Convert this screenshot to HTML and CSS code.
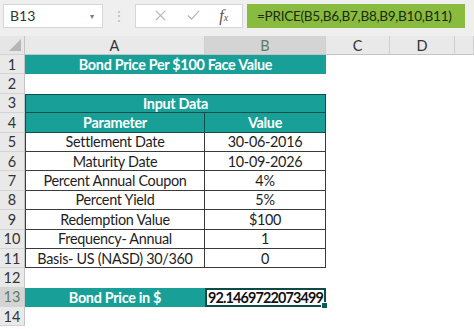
FILE: index.html
```html
<!DOCTYPE html>
<html lang="en">
<head>
  <meta charset="UTF-8" />
  <title>PRICE Function</title>
  <link rel="stylesheet" href="styles.css">
</head>
<body>
  <div class="toolbar">
    <div class="namebox">
      <span>B13</span>
      <span class="caret">&#9662;</span>
    </div>
    <div class="dots">&#8942;</div>
    <div class="fxbox">
      <svg class="ico" viewBox="0 0 14 14"><path d="M2 2 L12 12 M12 2 L2 12" /></svg>
      <svg class="ico" viewBox="0 0 14 14"><path d="M1 7 L5 11 L13 2" /></svg>
      <span class="fx">f<sub>x</sub></span>
    </div>
    <div class="formula">=PRICE(B5,B6,B7,B8,B9,B10,B11)</div>
  </div>

  <div class="sheet">
    <div class="row head">
      <div class="rh corner"></div>
      <div class="ch ca">A</div>
      <div class="ch cb sel">B</div>
      <div class="ch cc">C</div>
      <div class="ch cd">D</div>
      <div class="ch ce"></div>
    </div>

    <div class="row">
      <div class="rh">1</div>
      <div class="c ab teal">Bond Price Per $100 Face Value</div>
    </div>
    <div class="row">
      <div class="rh">2</div>
    </div>
    <div class="row">
      <div class="rh">3</div>
      <div class="c ab teal bd top">Input Data</div>
    </div>
    <div class="row">
      <div class="rh">4</div>
      <div class="c ca teal bd">Parameter</div>
      <div class="c cb teal bd">Value</div>
    </div>
    <div class="row">
      <div class="rh">5</div>
      <div class="c ca bd">Settlement Date</div>
      <div class="c cb bd">30-06-2016</div>
    </div>
    <div class="row">
      <div class="rh">6</div>
      <div class="c ca bd">Maturity Date</div>
      <div class="c cb bd">10-09-2026</div>
    </div>
    <div class="row">
      <div class="rh">7</div>
      <div class="c ca bd">Percent Annual Coupon</div>
      <div class="c cb bd">4%</div>
    </div>
    <div class="row">
      <div class="rh">8</div>
      <div class="c ca bd">Percent Yield</div>
      <div class="c cb bd">5%</div>
    </div>
    <div class="row">
      <div class="rh">9</div>
      <div class="c ca bd">Redemption Value</div>
      <div class="c cb bd">$100</div>
    </div>
    <div class="row">
      <div class="rh">10</div>
      <div class="c ca bd">Frequency- Annual</div>
      <div class="c cb bd">1</div>
    </div>
    <div class="row">
      <div class="rh">11</div>
      <div class="c ca bd">Basis- US (NASD) 30/360</div>
      <div class="c cb bd">0</div>
    </div>
    <div class="row">
      <div class="rh">12</div>
    </div>
    <div class="row">
      <div class="rh sel">13</div>
      <div class="c ca teal">Bond Price in $</div>
      <div class="c cb active">92.1469722073499<span class="handle"></span></div>
    </div>
    <div class="row">
      <div class="rh">14</div>
    </div>
  </div>
</body>
</html>
```

FILE: styles.css
```css
body {
  margin: 0;
  width: 474px;
  height: 329px;
  overflow: hidden;
  background: #fff;
  font-family: Lato, "Open Sans", sans-serif;
  color: #1e1e1e;
}

/* formula bar */
.toolbar {
  display: flex;
  align-items: center;
  height: 36px;
  padding: 0 0 5px 3px;
  background: #efefef;
  box-sizing: border-box;
}

.namebox {
  width: 100px;
  height: 24px;
  background: #fff;
  border: 1px solid #d6d6d6;
  box-sizing: border-box;
  display: flex;
  align-items: center;
  justify-content: space-between;
  padding: 0 8px 0 6px;
  font-size: 14px;
  color: #333;
}

.caret {
  font-size: 8px;
  color: #777;
}

.dots {
  width: 32px;
  text-align: center;
  color: #bbb;
  font-size: 14px;
}

.fxbox {
  width: 108px;
  height: 24px;
  background: #fff;
  border: 1px solid #d6d6d6;
  box-sizing: border-box;
  display: flex;
  align-items: center;
  justify-content: space-around;
  padding: 0 4px 0 8px;
}

.ico {
  width: 13px;
  height: 13px;
  fill: none;
  stroke: #b4b4b4;
  stroke-width: 1.3;
}

.fx {
  font-family: "Liberation Serif", serif;
  font-style: italic;
  font-size: 16px;
  color: #555;
}

.fx sub {
  font-size: 10px;
  vertical-align: 0;
}

.formula {
  margin-left: 4px;
  width: 218px;
  height: 24px;
  background: #88bb3e;
  display: flex;
  align-items: center;
  padding-left: 10px;
  box-sizing: border-box;
  font-size: 13.6px;
  color: #1c2a10;
  white-space: nowrap;
  letter-spacing: -0.3px;
}

/* grid */
.sheet {
  display: flex;
  flex-direction: column;
}

.row {
  display: flex;
  height: 19.4px;
}

.row.head {
  height: 19px;
}

.rh {
  width: 25px;
  flex: none;
  box-sizing: border-box;
  background: #e9e9e9;
  border-right: 1px solid #c4c4c4;
  border-bottom: 1px solid #d4d4d4;
  font-size: 14.5px;
  color: #333;
  display: flex;
  align-items: center;
  justify-content: center;
}

.rh.sel {
  background: #d4d4d4;
  color: #5f7a68;
}

.corner {
  position: relative;
  background: #e6e6e6;
}

.corner::after {
  content: "";
  position: absolute;
  right: 3px;
  bottom: 3px;
  border-left: 12px solid transparent;
  border-bottom: 12px solid #b5b5b5;
}

.ch {
  flex: none;
  box-sizing: border-box;
  background: #e9e9e9;
  border-right: 1px solid #cfcfcf;
  border-bottom: 1px solid #c4c4c4;
  font-size: 14.5px;
  color: #333;
  display: flex;
  align-items: center;
  justify-content: center;
}

.ch.sel {
  background: #d4d4d4;
  color: #5f7a68;
}

.ca { width: 180px; flex: none; }
.cb { width: 121px; flex: none; }
.cc { width: 64px; }
.cd { width: 65px; }
.ce { flex: 1; }
.ab { width: 301px; flex: none; }

.c {
  box-sizing: border-box;
  font-size: 14.4px;
  letter-spacing: -0.3px;
  display: flex;
  align-items: center;
  justify-content: center;
  white-space: nowrap;
}

.teal {
  background: #18a098;
  color: #fff;
  font-weight: bold;
}

.bd {
  border-right: 1px solid #3a3a3a;
  border-bottom: 1px solid #3a3a3a;
}

.bd.ca, .bd.ab {
  border-left: 1px solid #3a3a3a;
}

.bd.top {
  border-top: 1px solid #3a3a3a;
}

.teal.bd {
  border-color: #0f4f4b;
}

.active {
  position: relative;
  border: 2px solid #0f4a46;
  justify-content: flex-start;
  padding-left: 1px;
  font-weight: bold;
  letter-spacing: -0.85px;
  color: #111;
}

.handle {
  position: absolute;
  right: -4px;
  bottom: -4px;
  width: 5px;
  height: 5px;
  background: #0f5a55;
  border: 1px solid #fff;
}
```
